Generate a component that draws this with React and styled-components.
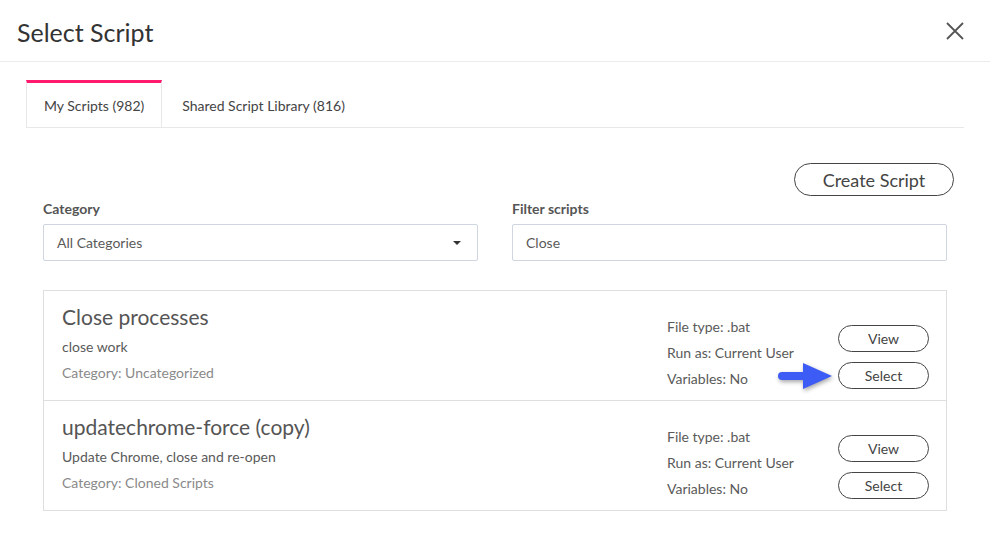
import React from "react";
import styled, { createGlobalStyle } from "styled-components";

const GlobalStyle = createGlobalStyle`
  body {
    margin: 0;
    background: #ffffff;
    font-family: "Lato", "Open Sans", sans-serif;
    color: #5a5a5a;
  }
`;

const Modal = styled.div`
  width: 990px;
  background: #fff;
`;

const Header = styled.div`
  display: flex;
  align-items: center;
  justify-content: space-between;
  height: 62px;
  padding: 0 26px 0 17px;
  border-bottom: 1px solid #ececec;
  box-sizing: border-box;
`;

const Title = styled.h1`
  margin: 0;
  font-size: 25px;
  font-weight: 400;
  color: #333;
  padding-top: 2px;
`;

const CloseButton = styled.button`
  background: none;
  border: none;
  padding: 0;
  display: flex;
  cursor: pointer;
`;

const Body = styled.div`
  padding: 18px 26px 0 26px;
`;

const TabBar = styled.div`
  display: flex;
  border-bottom: 1px solid #e8e8e8;
`;

const Tab = styled.div`
  display: flex;
  align-items: center;
  height: 47px;
  padding: 0 17px 0 ${(p) => (p.active ? "17px" : "19px")};
  box-sizing: border-box;
  font-size: 14px;
  color: #444;
  background: ${(p) => (p.active ? "#fff" : "transparent")};
  margin-bottom: ${(p) => (p.active ? "-1px" : "0")};
  border-top: 3px solid ${(p) => (p.active ? "#ff1a6e" : "transparent")};
  border-left: 1px solid ${(p) => (p.active ? "#e8e8e8" : "transparent")};
  border-right: 1px solid ${(p) => (p.active ? "#e8e8e8" : "transparent")};
  cursor: pointer;
`;

const Content = styled.div`
  padding: 0 17px;
`;

const Toolbar = styled.div`
  display: flex;
  justify-content: flex-end;
  margin: 35px -7px 0 0;
`;

const CreateButton = styled.button`
  width: 160px;
  height: 33px;
  border: 1px solid #444;
  border-radius: 17px;
  background: #fff;
  color: #444;
  font-family: inherit;
  font-size: 18px;
  cursor: pointer;
`;

const FilterRow = styled.div`
  display: grid;
  grid-template-columns: 435px 435px;
  column-gap: 34px;
  margin-top: 3px;
`;

const Field = styled.div`
  display: flex;
  flex-direction: column;
`;

const Label = styled.label`
  font-size: 14px;
  font-weight: 700;
  color: #555;
  line-height: 20px;
  margin-bottom: 5px;
`;

const Box = styled.div`
  display: flex;
  align-items: center;
  justify-content: space-between;
  height: 37px;
  box-sizing: border-box;
  padding: 0 16px 0 13px;
  border: 1px solid #cfd6df;
  border-radius: 2px;
  font-size: 14px;
  color: #5a5a5a;
`;

const Caret = styled.span`
  width: 0;
  height: 0;
  border-left: 4px solid transparent;
  border-right: 4px solid transparent;
  border-top: 4px solid #333;
`;

const List = styled.div`
  margin-top: 29px;
  border: 1px solid #dedede;
  width: 904px;
  box-sizing: border-box;
`;

const Item = styled.div`
  display: flex;
  justify-content: space-between;
  height: 109px;
  padding: 0 17px 0 18px;
  & + & {
    border-top: 1px solid #dedede;
  }
`;

const Info = styled.div`
  display: flex;
  flex-direction: column;
  padding-top: 14px;
`;

const ItemTitle = styled.div`
  font-size: 21px;
  line-height: 24px;
  color: #555;
  margin-bottom: 5px;
`;

const Line = styled.div`
  font-size: 14px;
  line-height: 26px;
  color: ${(p) => (p.muted ? "#8a8a8a" : "#5a5a5a")};
`;

const Side = styled.div`
  display: flex;
  align-items: flex-start;
`;

const Meta = styled.div`
  width: 171px;
  padding-top: 23px;
`;

const Actions = styled.div`
  display: flex;
  flex-direction: column;
  gap: 10px;
  padding-top: 34px;
`;

const ActionWrap = styled.div`
  position: relative;
`;

const SmallButton = styled.button`
  width: 91px;
  height: 27px;
  border: 1px solid #444;
  border-radius: 14px;
  background: #fff;
  color: #444;
  font-family: inherit;
  font-size: 14px;
  cursor: pointer;
`;

const Pointer = styled.svg`
  position: absolute;
  right: calc(100% + 4px);
  top: 50%;
  transform: translateY(-50%);
  filter: drop-shadow(1px 2px 2px rgba(0, 0, 0, 0.35));
`;

const scripts = [
  {
    name: "Close processes",
    description: "close work",
    category: "Uncategorized",
    highlight: true,
  },
  {
    name: "updatechrome-force (copy)",
    description: "Update Chrome, close and re-open",
    category: "Cloned Scripts",
  },
];

const Arrow = () => (
  <Pointer width="56" height="30" viewBox="0 0 56 30">
    <path
      d="M4 11 L25 11 L25 2 L54 15 L25 28 L25 19 L4 19 A4 4 0 0 1 4 11 Z"
      fill="#3d5bf5"
    />
  </Pointer>
);

const ScriptItem = ({ script }) => (
  <Item>
    <Info>
      <ItemTitle>{script.name}</ItemTitle>
      <Line>{script.description}</Line>
      <Line muted>Category: {script.category}</Line>
    </Info>
    <Side>
      <Meta>
        <Line>File type: .bat</Line>
        <Line>Run as: Current User</Line>
        <Line>Variables: No</Line>
      </Meta>
      <Actions>
        <SmallButton>View</SmallButton>
        <ActionWrap>
          {script.highlight && <Arrow />}
          <SmallButton>Select</SmallButton>
        </ActionWrap>
      </Actions>
    </Side>
  </Item>
);

export default function App() {
  return (
    <Modal>
      <GlobalStyle />
      <Header>
        <Title>Select Script</Title>
        <CloseButton aria-label="Close">
          <svg width="18" height="18" viewBox="0 0 18 18">
            <path d="M1 1 L17 17 M17 1 L1 17" stroke="#555" strokeWidth="1.8" />
          </svg>
        </CloseButton>
      </Header>
      <Body>
        <TabBar>
          <Tab active>My Scripts (982)</Tab>
          <Tab>Shared Script Library (816)</Tab>
        </TabBar>
        <Content>
          <Toolbar>
            <CreateButton>Create Script</CreateButton>
          </Toolbar>
          <FilterRow>
            <Field>
              <Label>Category</Label>
              <Box>
                All Categories
                <Caret />
              </Box>
            </Field>
            <Field>
              <Label>Filter scripts</Label>
              <Box>Close</Box>
            </Field>
          </FilterRow>
          <List>
            {scripts.map((s) => (
              <ScriptItem key={s.name} script={s} />
            ))}
          </List>
        </Content>
      </Body>
    </Modal>
  );
}
